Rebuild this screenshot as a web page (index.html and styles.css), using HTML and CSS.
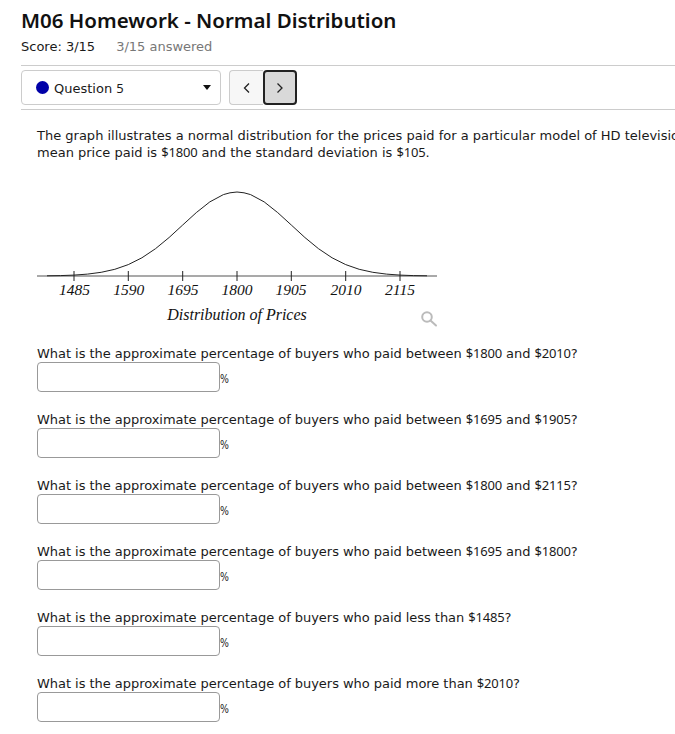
FILE: index.html
```html
<!DOCTYPE html>
<html lang="en">
<head>
<meta charset="utf-8">
<title>M06 Homework - Normal Distribution</title>
<link rel="stylesheet" href="styles.css">
</head>
<body>
<header class="head">
  <h1 class="title">M06 Homework - Normal Distribution</h1>
  <div class="score"><span>Score: 3/15</span><span class="answered">3/15 answered</span></div>
</header>
<nav class="bar">
  <div class="select">
    <span class="dot"></span>
    <span class="select-label">Question <span class="num">5</span></span>
    <span class="caret"></span>
  </div>
  <div class="pager">
    <button class="page prev" type="button" aria-label="Previous">
      <svg width="8" height="12" viewBox="0 0 8 12"><path d="M6 1.5 L1.5 6 L6 10.5" fill="none" stroke="#222" stroke-width="1.3"/></svg>
    </button>
    <button class="page next" type="button" aria-label="Next">
      <svg width="8" height="12" viewBox="0 0 8 12"><path d="M1.5 1.5 L6 6 L1.5 10.5" fill="none" stroke="#222" stroke-width="1.3"/></svg>
    </button>
  </div>
</nav>
<main class="content">
  <p class="intro">The graph illustrates a normal distribution for the prices paid for a particular model of HD televisions. The<br>mean price paid is <span class="num">$1800</span> and the standard deviation is <span class="num">$105</span>.</p>
  <svg class="graph" width="420" height="150" viewBox="37 185 420 150">
    <line x1="37" y1="276" x2="437" y2="276" stroke="#555" stroke-width="1.2"/>
    <g stroke="#222" stroke-width="1">
      <line x1="74" y1="271" x2="74" y2="281"/>
      <line x1="128.3" y1="271" x2="128.3" y2="281"/>
      <line x1="182.7" y1="271" x2="182.7" y2="281"/>
      <line x1="237" y1="271" x2="237" y2="281"/>
      <line x1="291.3" y1="271" x2="291.3" y2="281"/>
      <line x1="345.7" y1="271" x2="345.7" y2="281"/>
      <line x1="400" y1="271" x2="400" y2="281"/>
    </g>
    <polyline fill="none" stroke="#222" stroke-width="1" stroke-linejoin="round" points="47,275.8 60.4,275.6 74,275.1 87.6,274.1 101.2,272.3 114.8,269.3 128.3,264.6 141.9,257.8 155.5,248.7 169.1,237.5 182.7,225 196.3,212.6 209.8,201.9 223.4,194.6 230,192.8 237,192 244,192.8 250.6,194.6 264.2,201.9 277.7,212.6 291.3,225 304.9,237.5 318.5,248.7 332.1,257.8 345.7,264.6 359.2,269.3 372.8,272.3 386.4,274.1 400,275.1 413.6,275.6 427,275.8"/>
    <g class="ticks" text-anchor="middle">
      <text x="74.5" y="295">1485</text>
      <text x="128.8" y="295">1590</text>
      <text x="183" y="295">1695</text>
      <text x="237" y="295">1800</text>
      <text x="291" y="295">1905</text>
      <text x="346" y="295">2010</text>
      <text x="400" y="295">2115</text>
      <text class="caption" x="237" y="320">Distribution of Prices</text>
    </g>
    <g fill="none" stroke="#bbb" stroke-width="2">
      <circle cx="427" cy="317" r="4.8"/>
      <line x1="430.5" y1="320.5" x2="436" y2="325.5" stroke-linecap="round"/>
    </g>
  </svg>
  <div class="question">
    <p class="q-text">What is the approximate percentage of buyers who paid between <span class="num">$1800</span> and <span class="num">$2010</span>?</p>
    <div class="answer"><input class="field" type="text"><span class="pct">%</span></div>
  </div>
  <div class="question">
    <p class="q-text">What is the approximate percentage of buyers who paid between <span class="num">$1695</span> and <span class="num">$1905</span>?</p>
    <div class="answer"><input class="field" type="text"><span class="pct">%</span></div>
  </div>
  <div class="question">
    <p class="q-text">What is the approximate percentage of buyers who paid between <span class="num">$1800</span> and <span class="num">$2115</span>?</p>
    <div class="answer"><input class="field" type="text"><span class="pct">%</span></div>
  </div>
  <div class="question">
    <p class="q-text">What is the approximate percentage of buyers who paid between <span class="num">$1695</span> and <span class="num">$1800</span>?</p>
    <div class="answer"><input class="field" type="text"><span class="pct">%</span></div>
  </div>
  <div class="question">
    <p class="q-text">What is the approximate percentage of buyers who paid less than <span class="num">$1485</span>?</p>
    <div class="answer"><input class="field" type="text"><span class="pct">%</span></div>
  </div>
  <div class="question">
    <p class="q-text">What is the approximate percentage of buyers who paid more than <span class="num">$2010</span>?</p>
    <div class="answer"><input class="field" type="text"><span class="pct">%</span></div>
  </div>
</main>
</body>
</html>
```
FILE: styles.css
```css
html { overflow: hidden; }
body {
  margin: 0;
  width: 800px;
  height: 734px;
  overflow: hidden;
  padding-left: 21px;
  background: #fff;
  color: #1a1a1a;
  font-family: "DejaVu Sans", sans-serif;
  font-size: 13px;
}
.head { height: 65px; padding-top: 7px; box-sizing: border-box; }
.title { margin: 0; font-family: "Noto Sans", sans-serif; font-size: 20.5px; line-height: 27px; font-weight: 600; color: #111; }
.score { display: flex; gap: 21px; margin-top: 4px; line-height: 18px; }
.answered { color: #777; }
.bar { display: flex; gap: 8px; height: 45px; padding-top: 4px; box-sizing: border-box; border-top: 1px solid #ccc; border-bottom: 1px solid #ccc; }
.select { width: 200px; height: 35px; box-sizing: border-box; border: 1px solid #ccc; border-radius: 4px; display: flex; align-items: center; padding: 0 8px 0 14px; }
.dot { width: 13px; height: 13px; border-radius: 50%; background: #0000a8; margin-right: 5px; }
.select-label { flex: 1; }
.caret { width: 0; height: 0; border-left: 4px solid transparent; border-right: 4px solid transparent; border-top: 5px solid #111; margin-right: 1px; }
.pager { display: flex; }
.page { width: 34px; height: 35px; padding: 0; display: flex; align-items: center; justify-content: center; }
.prev { background: #f7f7f7; border: 1px solid #ccc; border-right: 0; border-radius: 4px 0 0 4px; }
.next { background: #d9d9d9; border: 2px solid #222; border-radius: 4px; }
.content { padding-left: 16px; }
.intro { margin: 17px 0 0; line-height: 17px; white-space: nowrap; }
.graph { display: block; margin-top: 24px; margin-bottom: 10px; }
.ticks { font-family: "Liberation Serif", serif; font-style: italic; font-size: 15.5px; fill: #111; }
.caption { font-size: 16px; }
.question { height: 66px; }
.q-text { margin: 0; line-height: 17px; white-space: nowrap; letter-spacing: -0.04px; }
.num { font-family: "Noto Sans", sans-serif; letter-spacing: -0.2px; }
.answer { display: flex; align-items: flex-end; }
.field { width: 183px; height: 30px; box-sizing: border-box; border: 1px solid #999; border-radius: 4px; background: #fff; padding: 0; }
.pct { font-size: 13px; line-height: 15px; margin-bottom: 6px; transform: scaleX(0.72); transform-origin: left center; }
```
